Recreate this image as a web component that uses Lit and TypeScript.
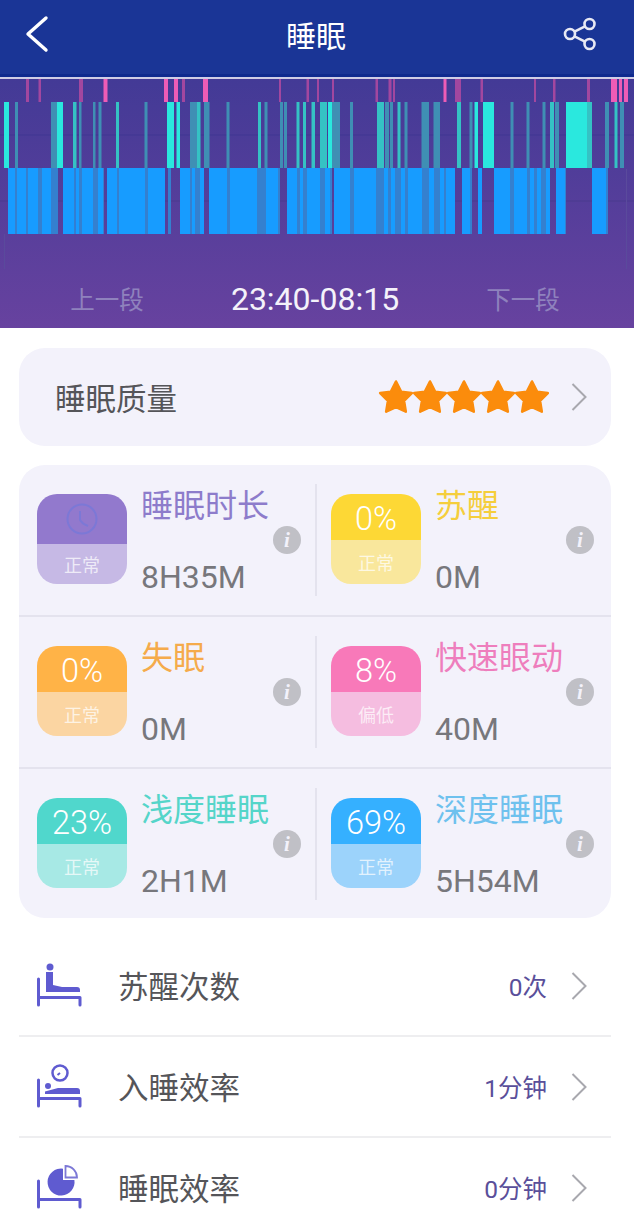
import { LitElement, html, css, svg } from "lit";
import { customElement, property } from "lit/decorators.js";

const FONT = css`Roboto, "Noto Sans CJK SC", sans-serif`;

// [from, to] in px along the chart
const PINK_BRIGHT = [[103.5, 107.5], [164, 168], [174, 178], [203, 208], [443.5, 446.5], [611, 617], [619, 622], [624, 628]];
const PINK_DIM = [[26, 29], [38.5, 41], [79, 83], [182, 185], [279, 281], [306.5, 309], [317, 319], [332, 334], [375.5, 378], [388.5, 391.5], [393, 395], [455, 461], [480.5, 483], [534, 536], [553, 555.5], [587, 590]];

const TEAL_BRIGHT = [[4, 9], [57, 63], [167, 174], [176.5, 180], [328, 332], [474.5, 478], [483, 494], [566, 587]];
const TEAL_MID = [[73, 76.5], [116, 119], [197, 200.5], [258, 261], [296.5, 299.5], [303, 306], [311.5, 315], [320, 327], [377, 384], [397.5, 400.5], [457, 461], [550, 554], [587, 592], [614.5, 617.5]];
const TEAL_DIM = [[15, 18], [51, 57], [79, 81.5], [93, 95.5], [98.5, 101.5], [144.5, 147.5], [190, 197], [204, 209.5], [226.5, 229.5], [264.5, 267.5], [280, 283], [284, 287], [332, 340], [350, 353], [385, 389], [390, 393], [404.5, 407.5], [421.5, 429], [433.5, 440], [469.5, 472.5], [510.5, 513.5], [526.5, 529.5], [542.5, 545.5], [555, 559], [605, 609], [620, 624]];

const BLUE_BRIGHT = [[8, 15], [17, 26], [28, 38], [42, 51], [63, 74], [75.5, 79], [82, 93], [98, 103], [107, 117], [119, 145], [148, 165], [180, 190], [192, 195], [200, 204], [209, 227], [230, 257], [266, 278], [287, 297], [300, 303], [307, 320], [325, 330], [334, 350], [354, 376], [384, 388], [391, 395], [401, 405], [408, 422], [429, 434], [440, 444], [446, 455], [462, 470], [478, 482], [494, 510], [514, 527], [530, 534], [537, 541], [546, 550], [556, 565], [592, 606]];
const BLUE_DIM = [[15, 17], [26, 28], [38, 42], [51, 58], [74, 75.5], [79, 82], [93, 98], [103, 104], [117, 119], [145, 148], [168, 171], [190, 192], [195, 200], [227, 230], [257, 266], [278, 280], [297, 300], [303, 307], [320, 325], [330, 332], [350, 354], [376, 384], [388, 391], [395, 401], [405, 408], [422, 429], [434, 440], [444, 446], [470, 472], [510, 514], [527, 530], [534, 537], [541, 546], [565, 566], [606, 608]];

const bars = (list: number[][], y: number, h: number, fill: string) =>
  list.map(([a, b]) => svg`<rect x=${a} y=${y} width=${b - a} height=${h} fill=${fill}></rect>`);

@customElement("sleep-chart")
export class SleepChart extends LitElement {
  static styles = css`
    :host {
      display: block;
    }
    svg {
      display: block;
    }
  `;

  render() {
    return html`<svg width="634" height="190" viewBox="0 0 634 190">
      <line x1="0" x2="634" y1="56" y2="56" stroke="#413792" stroke-width="1"></line>
      <line x1="0" x2="634" y1="122" y2="122" stroke="#4b3a8e" stroke-width="1"></line>
      <line x1="4.5" x2="4.5" y1="155" y2="190" stroke="#5a4a9c" stroke-width="1"></line>
      <line x1="626.5" x2="626.5" y1="90" y2="190" stroke="#5a4a9c" stroke-width="1"></line>
      ${bars(PINK_DIM, 0, 23, "#a2479f")}
      ${bars(PINK_BRIGHT, 0, 23, "#ee5cb6")}
      ${bars(TEAL_DIM, 23, 66, "#3f8fb4")}
      ${bars(TEAL_MID, 23, 66, "#35c2c4")}
      ${bars(TEAL_BRIGHT, 23, 66, "#2ae8de")}
      ${bars(BLUE_DIM, 89, 66, "#3480cf")}
      ${bars(BLUE_BRIGHT, 89, 66, "#179cff")}
    </svg>`;
  }
}

const chevron = html`<svg class="chev" width="18" height="30" viewBox="0 0 18 30">
  <path d="M2.5 2 L15.5 15 L2.5 28" fill="none" stroke="#a8a8ae" stroke-width="2"></path>
</svg>`;

@customElement("stat-cell")
export class StatCell extends LitElement {
  @property() label = "";
  @property() value = "";
  @property() pct = "";
  @property() status = "正常";
  @property() tone = "";

  static styles = css`
    :host {
      display: flex;
      align-items: flex-start;
      font-family: ${FONT};
    }
    .badge {
      width: 90px;
      height: 90px;
      flex: none;
      border-radius: 20px;
      overflow: hidden;
      display: flex;
      flex-direction: column;
      text-align: center;
      color: #fff;
    }
    .top {
      box-sizing: border-box;
      height: 46px;
      padding-top: 4px;
      flex: none;
      display: flex;
      align-items: center;
      justify-content: center;
      font-size: 32.5px;
      font-weight: 300;
    }
    .top.tall {
      height: 50px;
      padding-top: 0;
    }
    .bottom {
      flex: 1;
      display: flex;
      align-items: center;
      justify-content: center;
      font-size: 18px;
      color: rgba(255, 255, 255, 0.72);
    }
    .text {
      margin: -3px 0 0 14px;
      height: 104px;
      display: flex;
      flex-direction: column;
      justify-content: space-between;
    }
    .label {
      font-size: 32px;
      line-height: 30px;
      white-space: nowrap;
    }
    .value {
      font-size: 32px;
      line-height: 36px;
      color: #77777c;
    }
    .info {
      width: 28px;
      height: 28px;
      margin: 32px 0 0 auto;
      border-radius: 50%;
      background: #c0c0c6;
      color: #f3f2fb;
      font: italic bold 21px/28px "Liberation Serif", serif;
      text-align: center;
    }
    .clock {
      display: block;
    }
    .purple .top { background: #9279cd; }
    .purple .bottom { background: #c6b9e5; }
    .purple .label { color: #8d7ccb; }
    .yellow .top { background: #fdd835; }
    .yellow .bottom { background: #f9e79c; }
    .yellow .label { color: #f5ce3c; }
    .orange .top { background: #ffb347; }
    .orange .bottom { background: #fbd5a2; }
    .orange .label { color: #f5ab4b; }
    .pink .top { background: #f879b9; }
    .pink .bottom { background: #f5bde0; }
    .pink .label { color: #ee7ebd; }
    .teal .top { background: #50d7cc; }
    .teal .bottom { background: #a7e9e5; }
    .teal .label { color: #55d5c9; }
    .blue .top { background: #35b0ff; }
    .blue .bottom { background: #9cd3fb; }
    .blue .label { color: #6ec1ee; }
  `;

  render() {
    const clock = html`<svg class="clock" width="34" height="34" viewBox="0 0 34 34">
      <circle cx="17" cy="17" r="14.5" fill="none" stroke="#7c78d6" stroke-width="2"></circle>
      <path d="M15 9 L15 18 C17 21 20 23 23 24" fill="none" stroke="#7c78d6" stroke-width="2"></path>
    </svg>`;
    return html`<div class="badge ${this.tone}">
        <div class="top ${this.pct ? "" : "tall"}">${this.pct || clock}</div>
        <div class="bottom">${this.status}</div>
      </div>
      <div class="text ${this.tone}">
        <div class="label">${this.label}</div>
        <div class="value">${this.value}</div>
      </div>
      <div class="info">i</div>`;
  }
}

const bedFrame = svg`<path d="M4.5 18 V44 M4.5 36.5 H46 V44" fill="none" stroke="#5f5bd0" stroke-width="3" stroke-linecap="round" stroke-linejoin="round"></path>`;

const ICONS = {
  wake: html`<svg width="50" height="50" viewBox="0 0 50 50">
    ${bedFrame}
    <circle cx="16" cy="6" r="3.5" fill="#5f5bd0"></circle>
    <path d="M12 11 H19 V24 L28 26 H43 Q46 26 46 29 V31 H12 Z" fill="#5f5bd0"></path>
  </svg>`,
  fall: html`<svg width="50" height="50" viewBox="0 0 50 50">
    ${bedFrame}
    <circle cx="26" cy="11" r="7.5" fill="none" stroke="#5f5bd0" stroke-width="2.5"></circle>
    <path d="M26 11 L23.5 13" stroke="#5f5bd0" stroke-width="2"></path>
    <circle cx="14" cy="24" r="3" fill="#5f5bd0"></circle>
    <path d="M11 29.5 L24 26 H43 Q46 26 46 29 V32 H11 Z" fill="#5f5bd0"></path>
  </svg>`,
  rate: html`<svg width="50" height="50" viewBox="0 0 50 50">
    ${bedFrame}
    <path d="M29 5.7 A13.5 13.5 0 1 0 40.4 17 H29 Z" fill="#5f5bd0"></path>
    <path d="M31.5 3 A11.5 11.5 0 0 1 43 14.5 H31.5 Z" fill="none" stroke="#7c78d6" stroke-width="1.8"></path>
  </svg>`,
};

@customElement("app-root")
export class AppRoot extends LitElement {
  static styles = css`
    :host {
      display: block;
      height: 1214px;
      overflow: hidden;
      background: #fff;
      font-family: ${FONT};
    }
    .bar {
      box-sizing: border-box;
      height: 77px;
      display: grid;
      grid-template-columns: 1fr auto 1fr;
      align-items: center;
      padding: 0 36px 7px 34px;
      background: #1a3596;
      border-bottom: 3px solid #0f2a8e;
      color: #fff;
      font-size: 30px;
    }
    .bar svg {
      display: block;
    }
    .back {
      margin-left: -10px;
    }
    .share {
      justify-self: end;
    }
    .rule {
      height: 2px;
      background: #cfcde6;
    }
    .hero {
      height: 249px;
      background: linear-gradient(#433a96, #67429f);
    }
    .nav {
      height: 59px;
      display: grid;
      grid-template-columns: 214px 202px 214px;
      align-items: center;
      text-align: center;
      font-size: 24.5px;
      color: #8f82bd;
    }
    .time {
      font-size: 32px;
      color: #f4f2fa;
    }
    .quality {
      margin: 20px 23px 0 19px;
      height: 98px;
      border-radius: 26px;
      background: #f3f2fb;
      display: flex;
      align-items: center;
      padding: 0 23px 0 36px;
      font-size: 30.5px;
      color: #555559;
    }
    .stars {
      margin-left: auto;
      display: flex;
    }
    .stars svg {
      display: block;
      margin-right: -2px;
    }
    .quality .chev {
      margin-left: 22px;
    }
    .chev {
      display: block;
      flex: none;
    }
    .stats {
      margin: 19px 23px 0 19px;
      border-radius: 26px;
      background: #f3f2fb;
      overflow: hidden;
    }
    .row {
      display: grid;
      grid-template-columns: 296px 2px 1fr;
      height: 150px;
      border-bottom: 2px solid #e4e3ee;
    }
    .row:last-child {
      height: 149px;
      border-bottom: 0;
    }
    .left {
      padding: 29px 14px 0 18px;
    }
    .right {
      padding: 29px 17px 0 14px;
    }
    .sep {
      margin-top: 19px;
      height: 112px;
      background: #e4e3ee;
    }
    .list {
      margin: 18px 23px 0 19px;
    }
    .item {
      height: 99px;
      display: flex;
      align-items: center;
      border-bottom: 2px solid #eeeef0;
      padding: 0 23px 0 15px;
      font-size: 30.5px;
      color: #555559;
    }
    .item svg {
      display: block;
      flex: none;
    }
    .item .name {
      margin-left: 34px;
      margin-bottom: 2px;
    }
    .item .amount {
      margin-left: auto;
      font-size: 24.5px;
      color: #5a4f9a;
    }
    .item .chev {
      margin-left: 23px;
    }
  `;

  render() {
    const star = html`<svg width="36" height="36" viewBox="0 0 36 36">
      <path d="M18 2.5 L23.2 12.8 L33.8 14 L26 21.8 L27.8 32.6 L18 28 L8.2 32.6 L10 21.8 L2.2 14 L12.8 12.8 Z" fill="#fb8c0c" stroke="#fb8c0c" stroke-width="2.6" stroke-linejoin="round"></path>
    </svg>`;
    return html`
      <div class="bar">
        <svg class="back" width="26" height="38" viewBox="0 0 26 38">
          <path d="M22 3 L4 19 L22 35" fill="none" stroke="#fff" stroke-width="3.4" stroke-linecap="round" stroke-linejoin="round"></path>
        </svg>
        <div>睡眠</div>
        <svg class="share" width="36" height="36" viewBox="0 0 36 36">
          <g fill="none" stroke="#e8e9f4" stroke-width="2.6">
            <circle cx="8" cy="18" r="5"></circle>
            <circle cx="27.5" cy="8" r="5"></circle>
            <circle cx="27.5" cy="28" r="5"></circle>
            <path d="M12.5 15.7 L23 10.3 M12.5 20.3 L23 25.7"></path>
          </g>
        </svg>
      </div>
      <div class="rule"></div>
      <div class="hero">
        <sleep-chart></sleep-chart>
        <div class="nav">
          <div>上一段</div>
          <div class="time">23:40-08:15</div>
          <div>下一段</div>
        </div>
      </div>
      <div class="quality">
        <div>睡眠质量</div>
        <div class="stars">${star}${star}${star}${star}${star}</div>
        ${chevron}
      </div>
      <div class="stats">
        <div class="row">
          <stat-cell class="left" tone="purple" label="睡眠时长" value="8H35M"></stat-cell>
          <div class="sep"></div>
          <stat-cell class="right" tone="yellow" pct="0%" label="苏醒" value="0M"></stat-cell>
        </div>
        <div class="row">
          <stat-cell class="left" tone="orange" pct="0%" label="失眠" value="0M"></stat-cell>
          <div class="sep"></div>
          <stat-cell class="right" tone="pink" pct="8%" status="偏低" label="快速眼动" value="40M"></stat-cell>
        </div>
        <div class="row">
          <stat-cell class="left" tone="teal" pct="23%" label="浅度睡眠" value="2H1M"></stat-cell>
          <div class="sep"></div>
          <stat-cell class="right" tone="blue" pct="69%" label="深度睡眠" value="5H54M"></stat-cell>
        </div>
      </div>
      <div class="list">
        <div class="item">${ICONS.wake}<span class="name">苏醒次数</span><span class="amount">0次</span>${chevron}</div>
        <div class="item">${ICONS.fall}<span class="name">入睡效率</span><span class="amount">1分钟</span>${chevron}</div>
        <div class="item">${ICONS.rate}<span class="name">睡眠效率</span><span class="amount">0分钟</span>${chevron}</div>
      </div>
    `;
  }
}
